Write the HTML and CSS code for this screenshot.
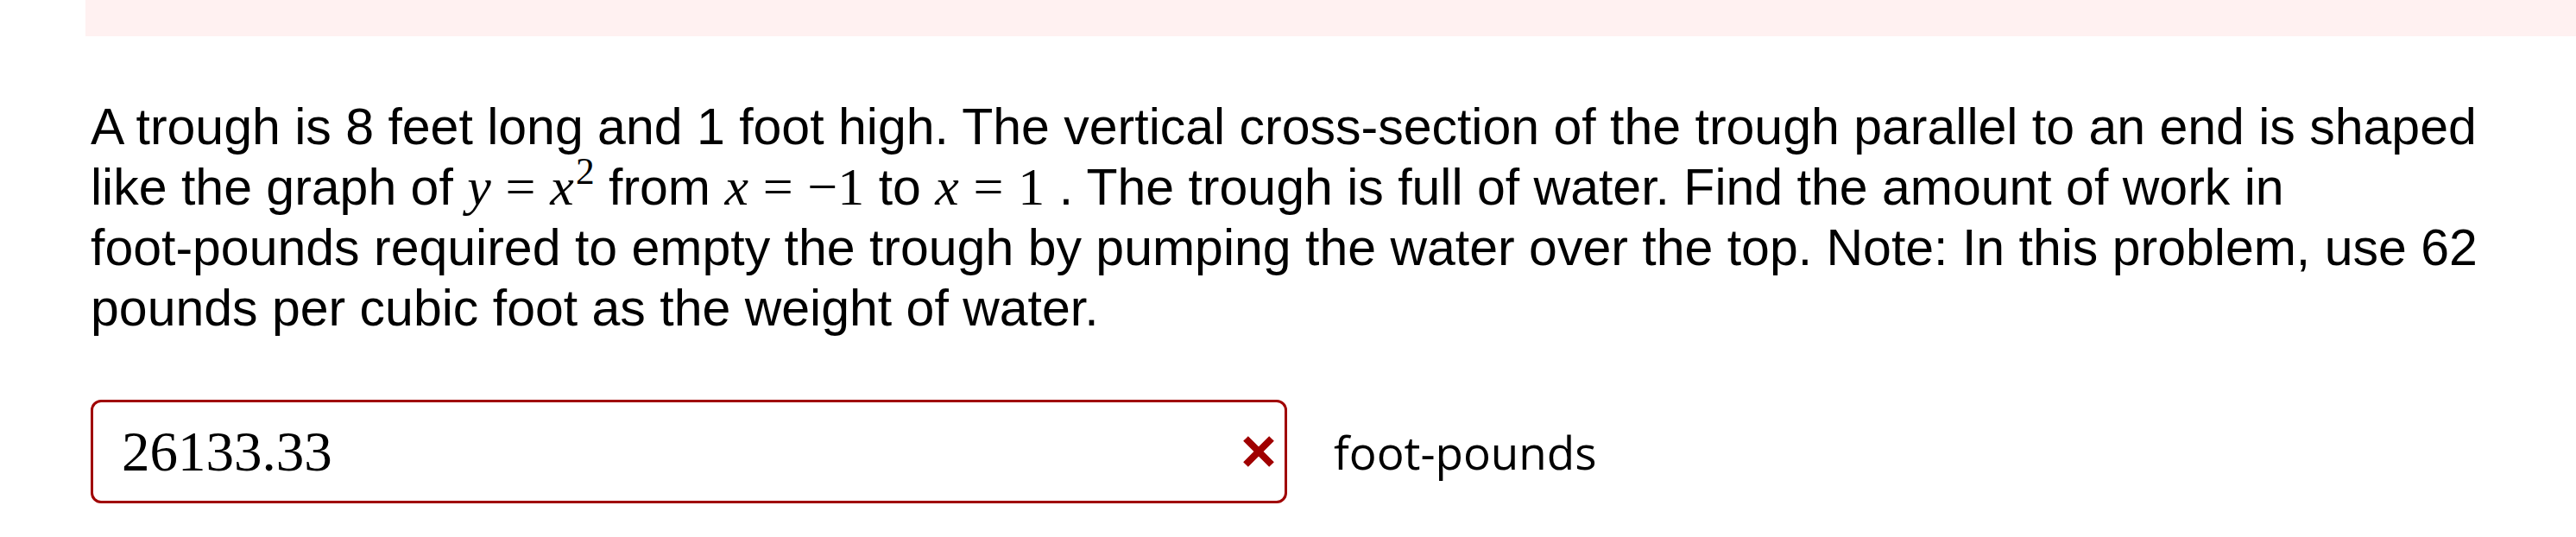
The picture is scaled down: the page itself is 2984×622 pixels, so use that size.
FILE: index.html
```html
<!DOCTYPE html>
<html lang="en">
<head>
<meta charset="utf-8">
<title>Trough problem</title>
<link rel="stylesheet" href="styles.css">
</head>
<body>
<div class="alert-band"></div>
<div class="problem">
  <p class="statement">A trough is 8 feet long and 1 foot high. The vertical cross-section of the trough parallel to an end is shaped like the graph of <span class="math"><i class="mi">y</i><span class="mo">=</span><i class="mi">x</i><sup class="msup">2</sup></span> from <span class="math"><i class="mi">x</i><span class="mo">=</span><span class="mn">&minus;1</span></span> to <span class="math"><i class="mi">x</i><span class="mo">=</span><span class="mn">1</span></span> . The trough is full of water. Find the amount of work in <span class="nobr">foot-pounds</span> required to empty the trough by pumping the water over the top. Note: In this problem, use 62 pounds per cubic foot as the weight of water.</p>
  <div class="answer-row">
    <div class="answer-box">
      <span class="answer-value">26133.33</span>
      <svg class="wrong-mark" viewBox="0 0 38 38" width="38" height="38" aria-label="incorrect">
        <path d="M4 4 L34 34 M34 4 L4 34" stroke="#a00000" stroke-width="8" fill="none"/>
      </svg>
    </div>
    <span class="units">foot-pounds</span>
  </div>
</div>
</body>
</html>
```
FILE: styles.css
```css
html, body {
  margin: 0;
  padding: 0;
  background: #ffffff;
}

.alert-band {
  margin-left: 99px;
  height: 42px;
  background: #fff1f1;
}

.problem {
  padding: 0 34px 0 105px;
  margin-top: 70px;
}

.statement {
  margin: 0;
  font-family: "Liberation Sans", Arial, sans-serif;
  font-size: 59px;
  line-height: 70px;
  color: #000;
}

.nobr {
  white-space: nowrap;
}

.math {
  font-family: "Liberation Serif", "DejaVu Serif", serif;
  font-size: 62px;
  line-height: 1;
  white-space: nowrap;
}

.mi {
  font-style: italic;
}

.mo {
  margin: 0 0.27em;
}

.msup {
  font-size: 0.7em;
  line-height: 0;
  vertical-align: 0.55em;
  margin-left: 0.05em;
}

.answer-row {
  display: flex;
  align-items: center;
  margin-top: 71px;
}

.answer-box {
  box-sizing: border-box;
  width: 1386px;
  height: 120px;
  border: 3px solid #a00000;
  border-radius: 12px;
  display: flex;
  align-items: center;
  justify-content: space-between;
  padding: 0 11px 0 33px;
}

.answer-value {
  font-family: "Liberation Serif", "DejaVu Serif", serif;
  font-size: 65px;
  color: #000;
}

.wrong-mark {
  display: block;
}

.units {
  margin-left: 54px;
  font-family: "Open Sans", "Liberation Sans", sans-serif;
  font-size: 53px;
  color: #000;
}
```
